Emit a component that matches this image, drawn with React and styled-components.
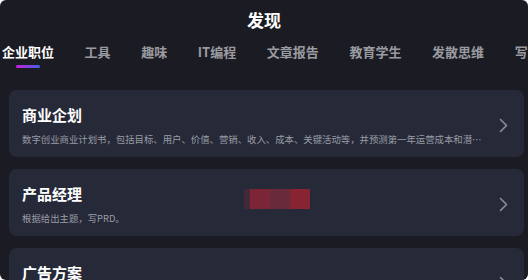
import React from "react";
import styled, { createGlobalStyle } from "styled-components";

const GlobalStyle = createGlobalStyle`
  html, body {
    margin: 0;
    padding: 0;
    background: #ffffff;
  }
  body {
    font-family: "Noto Sans CJK SC", "Noto Sans", sans-serif;
  }
`;

const tabs = ["企业职位", "工具", "趣味", "IT编程", "文章报告", "教育学生", "发散思维", "写作创意"];

const cards = [
  {
    title: "商业企划",
    desc:
      "数字创业商业计划书，包括目标、用户、价值、营销、收入、成本、关键活动等，并预测第一年运营成本和潜在收益。"
  },
  { title: "产品经理", desc: "根据给出主题，写PRD。", masked: true },
  { title: "广告方案", desc: "根据产品信息，撰写广告创意方案。" }
];

const Chevron = () => (
  <svg width="9" height="15" viewBox="0 0 9 15">
    <polyline
      points="1.5,1.5 7.5,7.5 1.5,13.5"
      fill="none"
      stroke="#8b8d98"
      strokeWidth="1.6"
      strokeLinecap="round"
      strokeLinejoin="round"
    />
  </svg>
);

// pixelated redaction over the second card
const Mosaic = () => (
  <Mask>
    <Tile $w={6} $c="#442839" />
    <Tile $w={20} $c="#7b2537" />
    <Tile $w={20} $c="#692a3b" />
    <Tile $w={20} $c="#882431" />
  </Mask>
);

export default function App() {
  return (
    <>
      <GlobalStyle />
      <Screen>
        <Header>发现</Header>
        <TabBar>
          {tabs.map((t, i) => (
            <Tab key={t}>
              <TabLabel $active={i === 0}>{t}</TabLabel>
              <Indicator $active={i === 0} />
            </Tab>
          ))}
        </TabBar>
        <List>
          {cards.map((c) => (
            <Card key={c.title}>
              <Text>
                <Title>{c.title}</Title>
                <Desc>{c.desc}</Desc>
              </Text>
              <Chevron />
              {c.masked && <Mosaic />}
            </Card>
          ))}
        </List>
      </Screen>
    </>
  );
}

const Screen = styled.div`
  width: 528px;
  height: 280px;
  background: #1b1c23;
  border-radius: 6px;
  overflow: hidden;
`;

const Header = styled.div`
  height: 40px;
  line-height: 40px;
  text-align: center;
  color: #ffffff;
  font-size: 17px;
  font-weight: 700;
`;

const TabBar = styled.div`
  display: flex;
  gap: 30.6px;
  padding-left: 2px;
  height: 28px;
  white-space: nowrap;
  overflow: hidden;
`;

const Tab = styled.div`
  display: flex;
  flex-direction: column;
  align-items: center;
  flex: none;
`;

const TabLabel = styled.span`
  line-height: 24px;
  font-size: 13px;
  font-weight: ${(p) => (p.$active ? 700 : 600)};
  color: ${(p) => (p.$active ? "#ffffff" : "#9a9ba0")};
`;

const Indicator = styled.div`
  margin-top: 1px;
  width: 24px;
  height: 3px;
  border-radius: 2px;
  background: ${(p) =>
    p.$active ? "linear-gradient(90deg, #c81de0, #3f62e0)" : "transparent"};
`;

const List = styled.div`
  display: flex;
  flex-direction: column;
  gap: 12px;
  padding: 22px 4px 0 9px;
`;

const Card = styled.div`
  position: relative;
  flex: none;
  height: 67px;
  box-sizing: border-box;
  padding: 15px 16px 11px 13px;
  display: flex;
  align-items: center;
  gap: 14px;
  background: #262a38;
  border-radius: 8px;
`;

const Text = styled.div`
  flex: 1;
  min-width: 0;
  align-self: flex-start;
`;

const Title = styled.div`
  color: #ffffff;
  font-size: 15px;
  font-weight: 700;
  line-height: 20px;
`;

const Desc = styled.div`
  margin-top: 7px;
  color: #9a9ca6;
  font-size: 9.4px;
  line-height: 14px;
  white-space: nowrap;
  overflow: hidden;
  text-overflow: ellipsis;
`;

const Mask = styled.div`
  position: absolute;
  left: 235px;
  top: 20px;
  height: 20px;
  display: flex;
`;

const Tile = styled.div`
  width: ${(p) => p.$w}px;
  height: 100%;
  background: ${(p) => p.$c};
`;
